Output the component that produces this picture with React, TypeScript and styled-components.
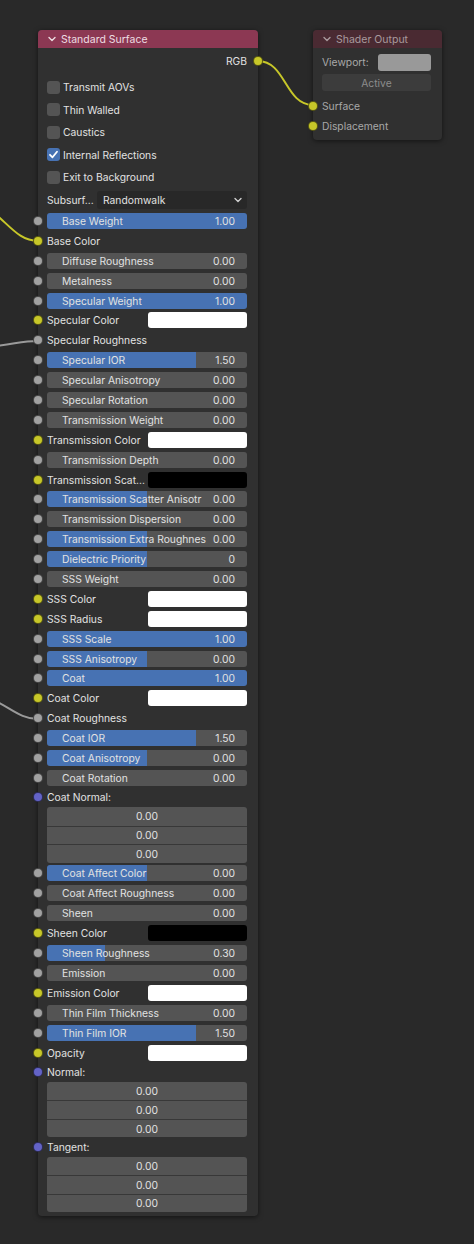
import { createGlobalStyle } from 'styled-components';
import styled from 'styled-components';

const GlobalStyle = createGlobalStyle`
	html, body {
		margin: 0;
		padding: 0;
		background: #292929;
	}
`;

const SOCKET = {
	float: '#a1a1a1',
	color: '#c7c729',
	vector: '#6363c7',
};

type SocketKind = keyof typeof SOCKET;

type Row =
	| { kind: 'slider'; label: string; value: string; fill: number; socket?: SocketKind }
	| { kind: 'color'; label: string; color: string }
	| { kind: 'linked'; label: string; socket: SocketKind }
	| { kind: 'vector'; label: string; values: string[] };

const rows: Row[] = [
	{ kind: 'slider', label: 'Base Weight', value: '1.00', fill: 1 },
	{ kind: 'linked', label: 'Base Color', socket: 'color' },
	{ kind: 'slider', label: 'Diffuse Roughness', value: '0.00', fill: 0 },
	{ kind: 'slider', label: 'Metalness', value: '0.00', fill: 0 },
	{ kind: 'slider', label: 'Specular Weight', value: '1.00', fill: 1 },
	{ kind: 'color', label: 'Specular Color', color: '#ffffff' },
	{ kind: 'linked', label: 'Specular Roughness', socket: 'float' },
	{ kind: 'slider', label: 'Specular IOR', value: '1.50', fill: 0.745 },
	{ kind: 'slider', label: 'Specular Anisotropy', value: '0.00', fill: 0 },
	{ kind: 'slider', label: 'Specular Rotation', value: '0.00', fill: 0 },
	{ kind: 'slider', label: 'Transmission Weight', value: '0.00', fill: 0 },
	{ kind: 'color', label: 'Transmission Color', color: '#ffffff' },
	{ kind: 'slider', label: 'Transmission Depth', value: '0.00', fill: 0 },
	{ kind: 'color', label: 'Transmission Scat...', color: '#000000' },
	{ kind: 'slider', label: 'Transmission Scatter Anisotr', value: '0.00', fill: 0.5 },
	{ kind: 'slider', label: 'Transmission Dispersion', value: '0.00', fill: 0 },
	{ kind: 'slider', label: 'Transmission Extra Roughnes', value: '0.00', fill: 0.5 },
	{ kind: 'slider', label: 'Dielectric Priority', value: '0', fill: 0.5 },
	{ kind: 'slider', label: 'SSS Weight', value: '0.00', fill: 0 },
	{ kind: 'color', label: 'SSS Color', color: '#ffffff' },
	{ kind: 'color', label: 'SSS Radius', color: '#ffffff' },
	{ kind: 'slider', label: 'SSS Scale', value: '1.00', fill: 1 },
	{ kind: 'slider', label: 'SSS Anisotropy', value: '0.00', fill: 0.5 },
	{ kind: 'slider', label: 'Coat', value: '1.00', fill: 1 },
	{ kind: 'color', label: 'Coat Color', color: '#ffffff' },
	{ kind: 'linked', label: 'Coat Roughness', socket: 'float' },
	{ kind: 'slider', label: 'Coat IOR', value: '1.50', fill: 0.745 },
	{ kind: 'slider', label: 'Coat Anisotropy', value: '0.00', fill: 0.5 },
	{ kind: 'slider', label: 'Coat Rotation', value: '0.00', fill: 0 },
	{ kind: 'vector', label: 'Coat Normal:', values: ['0.00', '0.00', '0.00'] },
	{ kind: 'slider', label: 'Coat Affect Color', value: '0.00', fill: 0.5 },
	{ kind: 'slider', label: 'Coat Affect Roughness', value: '0.00', fill: 0 },
	{ kind: 'slider', label: 'Sheen', value: '0.00', fill: 0 },
	{ kind: 'color', label: 'Sheen Color', color: '#000000' },
	{ kind: 'slider', label: 'Sheen Roughness', value: '0.30', fill: 0.29 },
	{ kind: 'slider', label: 'Emission', value: '0.00', fill: 0 },
	{ kind: 'color', label: 'Emission Color', color: '#ffffff' },
	{ kind: 'slider', label: 'Thin Film Thickness', value: '0.00', fill: 0 },
	{ kind: 'slider', label: 'Thin Film IOR', value: '1.50', fill: 0.745 },
	{ kind: 'color', label: 'Opacity', color: '#ffffff' },
	{ kind: 'vector', label: 'Normal:', values: ['0.00', '0.00', '0.00'] },
	{ kind: 'vector', label: 'Tangent:', values: ['0.00', '0.00', '0.00'] },
];

// rows above the first vector input sit slightly tighter than the ones below
const firstVector = rows.findIndex((r) => r.kind === 'vector');

const checks = [
	{ label: 'Transmit AOVs', on: false },
	{ label: 'Thin Walled', on: false },
	{ label: 'Caustics', on: false },
	{ label: 'Internal Reflections', on: true },
	{ label: 'Exit to Background', on: false },
];

const Canvas = styled.div`
	position: relative;
	width: 474px;
	height: 1244px;
	overflow: hidden;
	background: #292929;
	font-family: Inter, 'Noto Sans', sans-serif;
	font-size: 10.3px;
	color: #e2e2e2;
`;

const Wires = styled.svg`
	position: absolute;
	left: 0;
	top: 0;
	z-index: 0;
`;

const NodeFrame = styled.div<{ $left: number; $top: number; $width: number; $dim?: boolean }>`
	position: absolute;
	left: ${(p) => p.$left}px;
	top: ${(p) => p.$top}px;
	width: ${(p) => p.$width}px;
	z-index: 1;
	background: #303030;
	border-radius: 4px;
	box-shadow: 0 1px 5px rgba(0, 0, 0, 0.55);
	color: ${(p) => (p.$dim ? '#a8a8a8' : '#e2e2e2')};
`;

const Header = styled.div<{ $bg: string; $fg: string }>`
	height: 18px;
	display: flex;
	align-items: center;
	gap: 5px;
	padding-left: 10px;
	background: ${(p) => p.$bg};
	color: ${(p) => p.$fg};
	border-radius: 4px 4px 0 0;
	font-size: 10.5px;
`;

const Body = styled.div<{ $bottom: number }>`
	padding: 3px 11px ${(p) => p.$bottom}px 9px;
`;

const OutRow = styled.div`
	position: relative;
	height: 20px;
	display: flex;
	align-items: center;
	justify-content: flex-end;
`;

const Socket = styled.span<{ $color: string; $side: 'left' | 'right' }>`
	position: absolute;
	top: 50%;
	${(p) => (p.$side === 'left' ? 'left: -14px;' : 'right: -16px;')}
	width: 8px;
	height: 8px;
	margin-top: -5px;
	border-radius: 50%;
	background: ${(p) => p.$color};
	border: 1px solid rgba(0, 0, 0, 0.55);
`;

const CheckList = styled.div`
	margin-top: 5px;
`;

const CheckRow = styled.div`
	height: 22.5px;
	display: flex;
	align-items: center;
	gap: 3px;
`;

const Box = styled.span<{ $on: boolean }>`
	width: 13px;
	height: 13px;
	border-radius: 3px;
	background: ${(p) => (p.$on ? '#4772b3' : '#545454')};
	display: flex;
	align-items: center;
	justify-content: center;
`;

const DropRow = styled.div`
	height: 22.5px;
	display: flex;
	align-items: center;
`;

const DropLabel = styled.span`
	width: 50px;
	flex: none;
`;

const Select = styled.div`
	flex: 1;
	height: 18px;
	border-radius: 3px;
	background: #282828;
	display: flex;
	align-items: center;
	justify-content: space-between;
	padding: 0 5px 0 6px;
`;

const SockRow = styled.div<{ $h?: number }>`
	position: relative;
	height: ${(p) => p.$h ?? 20}px;
	display: flex;
	align-items: center;
`;

const Slider = styled.div<{ $fill: number }>`
	width: 100%;
	height: 16px;
	border-radius: 3px;
	background: linear-gradient(
		to right,
		#4772b3 ${(p) => p.$fill * 100}%,
		#545454 ${(p) => p.$fill * 100}%
	);
	display: flex;
	align-items: center;
	justify-content: space-between;
	padding: 0 12px 0 15px;
	box-sizing: border-box;
	white-space: nowrap;
`;

const Label = styled.span`
	flex: 1;
	white-space: nowrap;
	overflow: hidden;
`;

const Swatch = styled.span<{ $color: string }>`
	width: 99px;
	height: 16px;
	flex: none;
	border-radius: 3px;
	background: ${(p) => p.$color};
`;

const VectorBlock = styled.div`
	display: flex;
	flex-direction: column;
	border-radius: 3px;
	overflow: hidden;
`;

const VectorField = styled.div`
	height: 18.5px;
	box-sizing: border-box;
	background: #545454;
	display: flex;
	align-items: center;
	justify-content: center;

	& + & {
		border-top: 1px solid #383838;
	}
`;

const Swatchbox = styled.span`
	width: 53px;
	height: 17px;
	border-radius: 3px;
	background: #999999;
`;

const ViewRow = styled.div`
	height: 22px;
	display: flex;
	align-items: center;
	justify-content: space-between;
`;

const ActiveButton = styled.div`
	height: 17px;
	margin: 1px 0 4px;
	border-radius: 3px;
	background: #3c3c3c;
	color: #8c8c8c;
	display: flex;
	align-items: center;
	justify-content: center;
`;

const Chevron = ({ color }: { color: string }) => (
	<svg width="8" height="6" viewBox="0 0 8 6">
		<polyline points="1,1.5 4,4.5 7,1.5" fill="none" stroke={color} strokeWidth="1.4" strokeLinecap="round" strokeLinejoin="round" />
	</svg>
);

const Check = () => (
	<svg width="11" height="11" viewBox="0 0 11 11">
		<polyline points="2,5.8 4.5,8.3 9,2.8" fill="none" stroke="#ffffff" strokeWidth="1.8" strokeLinecap="round" strokeLinejoin="round" />
	</svg>
);

const renderRow = (row: Row, i: number) => {
	const h = i < firstVector ? 19.9 : 20;
	switch (row.kind) {
		case 'slider':
			return (
				<SockRow key={i} $h={h}>
					<Socket $side="left" $color={SOCKET[row.socket ?? 'float']} />
					<Slider $fill={row.fill}>
						<Label>{row.label}</Label>
						<span>{row.value}</span>
					</Slider>
				</SockRow>
			);
		case 'color':
			return (
				<SockRow key={i} $h={h}>
					<Socket $side="left" $color={SOCKET.color} />
					<Label>{row.label}</Label>
					<Swatch $color={row.color} />
				</SockRow>
			);
		case 'linked':
			return (
				<SockRow key={i} $h={h}>
					<Socket $side="left" $color={SOCKET[row.socket]} />
					<Label>{row.label}</Label>
				</SockRow>
			);
		case 'vector':
			return (
				<div key={i}>
					<SockRow $h={19.3}>
						<Socket $side="left" $color={SOCKET.vector} />
						<Label>{row.label}</Label>
					</SockRow>
					<VectorBlock>
						{row.values.map((v, j) => (
							<VectorField key={j}>{v}</VectorField>
						))}
					</VectorBlock>
				</div>
			);
	}
};

export default function App() {
	return (
		<Canvas>
			<GlobalStyle />
			<Wires width="474" height="1244">
				<path d="M -40 190 C 5 212, 12 241, 38 241" fill="none" stroke="#c7c729" strokeWidth="2" />
				<path d="M -5 346 C 15 344, 22 341, 38 341" fill="none" stroke="#9a9a9a" strokeWidth="2" />
				<path d="M -20 694 C 8 704, 18 719, 38 719" fill="none" stroke="#9a9a9a" strokeWidth="2" />
				<path d="M 258 61 C 286 61, 285 105, 313 105" fill="none" stroke="#c7c729" strokeWidth="2" />
			</Wires>

			<NodeFrame $left={38} $top={30} $width={220}>
				<Header $bg="#8c3853" $fg="#eddde2">
					<Chevron color="#eddde2" />
					<span>Standard Surface</span>
				</Header>
				<Body $bottom={4}>
					<OutRow>
						RGB
						<Socket $side="right" $color={SOCKET.color} />
					</OutRow>
					<CheckList>
						{checks.map((c) => (
							<CheckRow key={c.label}>
								<Box $on={c.on}>{c.on && <Check />}</Box>
								{c.label}
							</CheckRow>
						))}
					</CheckList>
					<DropRow>
						<DropLabel>Subsurf...</DropLabel>
						<Select>
							<span>Randomwalk</span>
							<Chevron color="#cfcfcf" />
						</Select>
					</DropRow>
					{rows.map(renderRow)}
				</Body>
			</NodeFrame>

			<NodeFrame $left={313} $top={30} $width={129} $dim>
				<Header $bg="#4a2a32" $fg="#a89a9d">
					<Chevron color="#a89a9d" />
					<span>Shader Output</span>
				</Header>
				<Body $bottom={4}>
					<ViewRow>
						<span>Viewport:</span>
						<Swatchbox />
					</ViewRow>
					<ActiveButton>Active</ActiveButton>
					<SockRow $h={21}>
						<Socket $side="left" $color={SOCKET.color} />
						<Label>Surface</Label>
					</SockRow>
					<SockRow $h={20}>
						<Socket $side="left" $color={SOCKET.color} />
						<Label>Displacement</Label>
					</SockRow>
				</Body>
			</NodeFrame>
		</Canvas>
	);
}
